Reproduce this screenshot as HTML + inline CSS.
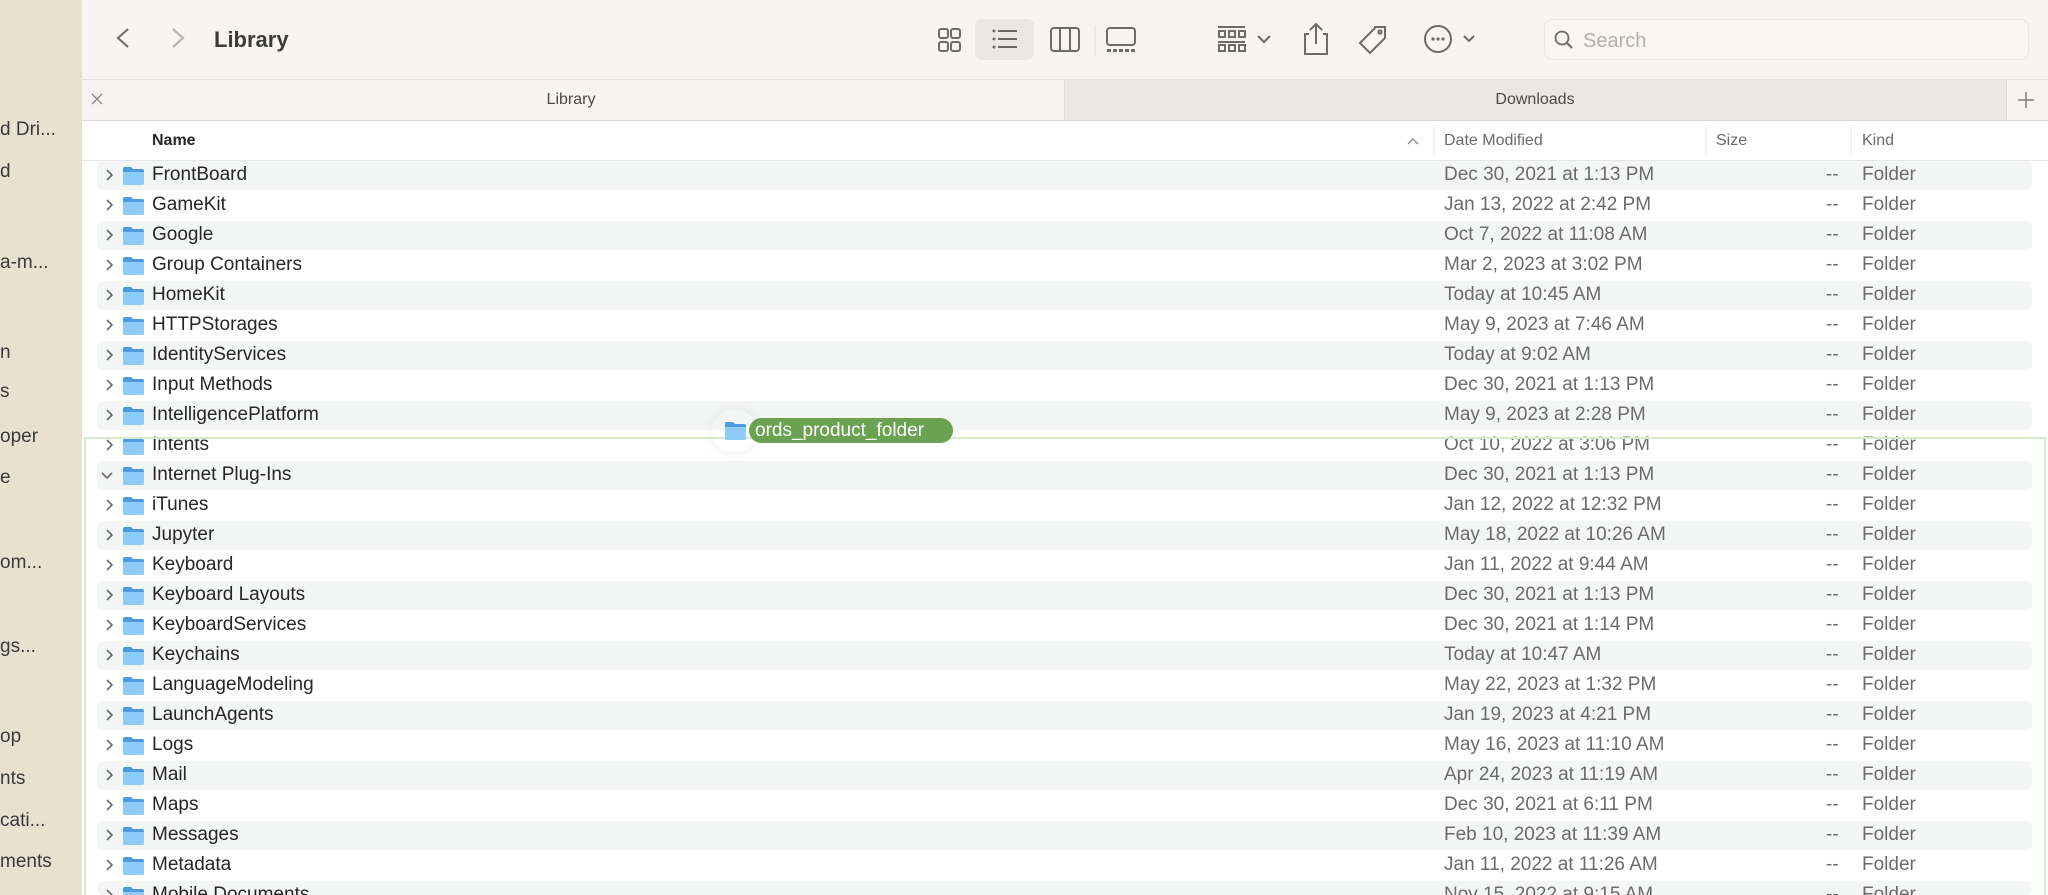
<!DOCTYPE html>
<html style="width:2048px;height:895px;overflow:hidden"><head><meta charset="utf-8"><style>
*{margin:0;padding:0;box-sizing:border-box}
body{width:2048px;height:895px;overflow:hidden;background:#fff;font-family:"Liberation Sans",sans-serif;position:relative}
#wrap{position:absolute;left:0;top:0;width:2048px;height:895px;overflow:hidden}
.a{position:absolute}
#side{left:0;top:0;width:82px;height:895px;background:#e9e1d0;overflow:hidden}
#side div{position:absolute;left:0;font-size:19px;color:#3a3a3a;white-space:nowrap}
#tb{left:82px;top:0;width:1966px;height:79px;background:#f7f4f1}
#tabs{left:82px;top:79px;width:1966px;height:42px;background:#f6f3f0;border-top:1px solid #e2dfdc;border-bottom:1px solid #dcd9d6}
.row{position:absolute;left:97px;width:1935px;height:29px;border-radius:6px}
.row.s{background:#f4f5f5}
.t{position:absolute;font-size:19px;white-space:nowrap;line-height:30px}
.n{left:152px;color:#262626}
.d{left:1444px;color:#6b6b6b}
.z{left:1826px;color:#6b6b6b}
.k{left:1862px;color:#6b6b6b}
.ic{stroke:#6b6b6b;fill:none;stroke-width:2}
</style></head><body><div id="wrap">
<div id="side" class="a">
<div style="top:119px">d Dri...</div>
<div style="top:161px">d</div>
<div style="top:252px">a-m...</div>
<div style="top:342px">n</div>
<div style="top:381px">s</div>
<div style="top:426px">oper</div>
<div style="top:467px">e</div>
<div style="top:552px">om...</div>
<div style="top:636px">gs...</div>
<div style="top:726px">op</div>
<div style="top:768px">nts</div>
<div style="top:810px">cati...</div>
<div style="top:851px">ments</div>
</div>
<div id="tb" class="a"></div>
<svg class="a" style="left:0;top:0" width="2048" height="79">
<path class="ic" d="M128 29 L118 38 L128 47" stroke-width="2.2"/>
<path d="M173 29 L183 38 L173 47" stroke="#b5b5b5" fill="none" stroke-width="2.2"/>
<text x="214" y="47" font-family="Liberation Sans" font-weight="bold" font-size="22" fill="#3c3c3c">Library</text>
<g class="ic" stroke-width="1.8">
<rect x="939" y="29" width="9" height="9" rx="2"/><rect x="951" y="29" width="9" height="9" rx="2"/><rect x="939" y="42" width="9" height="9" rx="2"/><rect x="951" y="42" width="9" height="9" rx="2"/>
</g>
<rect x="975" y="19" width="59" height="41" rx="7" fill="#ebe7e3"/>
<g class="ic" stroke-width="2.2"><path d="M998 31h19M998 39h19M998 47h19"/></g>
<g fill="#6b6b6b"><circle cx="994" cy="31" r="1.5"/><circle cx="994" cy="39" r="1.5"/><circle cx="994" cy="47" r="1.5"/></g>
<g class="ic" stroke-width="1.8"><rect x="1051" y="28" width="28" height="23" rx="3"/><path d="M1060 28v23M1070 28v23"/></g>
<path d="M1095 25v31" stroke="#e0dcd8" stroke-width="1"/>
<g class="ic" stroke-width="1.8"><rect x="1107" y="28" width="28" height="17" rx="3"/></g>
<g fill="#6b6b6b"><rect x="1107" y="49" width="4" height="3"/><rect x="1113" y="49" width="4" height="3"/><rect x="1119" y="49" width="4" height="3"/><rect x="1125" y="49" width="4" height="3"/><rect x="1131" y="49" width="4" height="3"/></g>
<g class="ic" stroke-width="1.6"><path d="M1218 27h27M1218 42h27"/><rect x="1219" y="31" width="6" height="6"/><rect x="1229" y="31" width="6" height="6"/><rect x="1239" y="31" width="6" height="6"/><rect x="1219" y="45" width="6" height="6"/><rect x="1229" y="45" width="6" height="6"/><rect x="1239" y="45" width="6" height="6"/></g>
<path class="ic" d="M1258 36l6 6 6-6"/>
<g class="ic" stroke-width="1.8"><path d="M1309 34h-4v20h22v-20h-4M1316 24v20M1310 30l6-6 6 6"/></g>
<g class="ic" stroke-width="1.8"><path d="M1375 27h10v11l-15 15-10-10 15-15z"/><circle cx="1380" cy="32" r="1.6"/></g>
<circle class="ic" cx="1438" cy="39" r="13" stroke-width="1.8"/>
<g fill="#6b6b6b"><circle cx="1433" cy="39" r="1.6"/><circle cx="1438" cy="39" r="1.6"/><circle cx="1443" cy="39" r="1.6"/></g>
<path class="ic" d="M1464 36l5 5 5-5"/>
<rect x="1544.5" y="19.5" width="484" height="40" rx="8" fill="#f8f5f2" stroke="#e8e5e2"/>
<circle cx="1562" cy="38" r="6.5" fill="none" stroke="#6b6b6b" stroke-width="1.8"/><path d="M1567 43l5 5" stroke="#6b6b6b" stroke-width="2"/>
<text x="1583" y="47" font-family="Liberation Sans" font-size="20" fill="#b3b0ad">Search</text>
</svg>
<div id="tabs" class="a"></div>
<div class="a" style="left:1064px;top:80px;width:943px;height:40px;background:#ebe7e3;border-left:1px solid #dcd9d6;border-right:1px solid #dcd9d6"></div>
<svg class="a" style="left:0;top:79px" width="2048" height="42">
<path d="M92 15l10 10M102 15l-10 10" stroke="#8a8a8a" stroke-width="1.4"/>
<text x="571" y="25" text-anchor="middle" font-family="Liberation Sans" font-size="16" fill="#4a4a4a">Library</text>
<text x="1535" y="25" text-anchor="middle" font-family="Liberation Sans" font-size="16" fill="#4a4a4a">Downloads</text>
<path d="M2026 13v16M2018 21h16" stroke="#7a7a7a" stroke-width="1.4"/>
</svg>
<div class="a" style="left:82px;top:121px;width:1966px;height:40px;background:#fff;border-bottom:1px solid #e6e6e6"></div>
<div class="t" style="left:152px;top:126px;font-size:16px;font-weight:bold;color:#262626">Name</div>
<div class="t" style="left:1444px;top:126px;font-size:16px;color:#6b6b6b">Date Modified</div>
<div class="t" style="left:1716px;top:126px;font-size:16px;color:#6b6b6b">Size</div>
<div class="t" style="left:1862px;top:126px;font-size:16px;color:#6b6b6b">Kind</div>
<svg class="a" style="left:0;top:121px" width="2048" height="40">
<path d="M1408 23l5-5 5 5" stroke="#8a8a8a" fill="none" stroke-width="1.3"/>
<path d="M1434 6v28M1706 6v28M1851 6v28" stroke="#e4e4e4" stroke-width="1"/>
</svg>
<div id="rows"></div>
<script>
(function(){
var R=[["FrontBoard","Dec 30, 2021 at 1:13 PM"],["GameKit","Jan 13, 2022 at 2:42 PM"],["Google","Oct 7, 2022 at 11:08 AM"],["Group Containers","Mar 2, 2023 at 3:02 PM"],["HomeKit","Today at 10:45 AM"],["HTTPStorages","May 9, 2023 at 7:46 AM"],["IdentityServices","Today at 9:02 AM"],["Input Methods","Dec 30, 2021 at 1:13 PM"],["IntelligencePlatform","May 9, 2023 at 2:28 PM"],["Intents","Oct 10, 2022 at 3:06 PM"],["Internet Plug-Ins","Dec 30, 2021 at 1:13 PM"],["iTunes","Jan 12, 2022 at 12:32 PM"],["Jupyter","May 18, 2022 at 10:26 AM"],["Keyboard","Jan 11, 2022 at 9:44 AM"],["Keyboard Layouts","Dec 30, 2021 at 1:13 PM"],["KeyboardServices","Dec 30, 2021 at 1:14 PM"],["Keychains","Today at 10:47 AM"],["LanguageModeling","May 22, 2023 at 1:32 PM"],["LaunchAgents","Jan 19, 2023 at 4:21 PM"],["Logs","May 16, 2023 at 11:10 AM"],["Mail","Apr 24, 2023 at 11:19 AM"],["Maps","Dec 30, 2021 at 6:11 PM"],["Messages","Feb 10, 2023 at 11:39 AM"],["Metadata","Jan 11, 2022 at 11:26 AM"],["Mobile Documents","Nov 15, 2022 at 9:15 AM"]];
var h="";
var folder='<path d="M1 3a2 2 0 0 1 2-2h6l2 2h9a2 2 0 0 1 2 2v12a2 2 0 0 1-2 2H3a2 2 0 0 1-2-2z" fill="#7cbcf0"/><path d="M1 3a2 2 0 0 1 2-2h6l2 2h9a2 2 0 0 1 2 2v1H1z" fill="#4f9be0"/><path d="M1 6h21v11a2 2 0 0 1-2 2H3a2 2 0 0 1-2-2z" fill="#8ecbf6"/>';
var svg='<svg class="a" style="left:0;top:0" width="160" height="895">';
for(var i=0;i<R.length;i++){var y=160+30*i;
if(i%2==0)h+='<div class="row s" style="top:'+(y+1)+'px;height:'+Math.min(29,894-y)+'px"></div>';
svg+=(i==10?'<path d="M0 0l5 5 5-5" stroke="#6b6b6b" fill="none" stroke-width="1.6" transform="translate(102 '+(y+13)+')"/>':'<path d="M0 0l5 5-5 5" stroke="#6b6b6b" fill="none" stroke-width="1.6" transform="translate(107 '+(y+10)+')"/>');
svg+='<g transform="translate(122 '+(y+6)+')">'+folder+'</g>';
h+='<div class="t n" style="top:'+y+'px">'+R[i][0]+'</div><div class="t d" style="top:'+y+'px">'+R[i][1]+'</div><div class="t z" style="top:'+y+'px">--</div><div class="t k" style="top:'+y+'px">Folder</div>';}
svg+='</svg>';
document.getElementById("rows").innerHTML=h+svg;
})();
</script>
<div class="a" style="left:84px;top:437px;width:1962px;height:470px;border:2px solid #d6ebcb"></div>
<div class="a" style="left:712px;top:410px;width:45px;height:42px;border-radius:20px;box-shadow:0 0 12px rgba(0,0,0,0.08)"></div>
<svg class="a" style="left:724px;top:421px" width="23" height="21"><path d="M1 3a2 2 0 0 1 2-2h6l2 2h9a2 2 0 0 1 2 2v12a2 2 0 0 1-2 2H3a2 2 0 0 1-2-2z" fill="#7cbcf0"/><path d="M1 3a2 2 0 0 1 2-2h6l2 2h9a2 2 0 0 1 2 2v1H1z" fill="#4f9be0"/><path d="M1 6h21v11a2 2 0 0 1-2 2H3a2 2 0 0 1-2-2z" fill="#8ecbf6"/></svg>
<div class="a" style="left:749px;top:418px;width:204px;height:25px;border-radius:13px;background:#6aa251;color:#fff;font-size:19px;line-height:25px;padding-left:6px;white-space:nowrap">ords_product_folder</div>
</div></body></html>
